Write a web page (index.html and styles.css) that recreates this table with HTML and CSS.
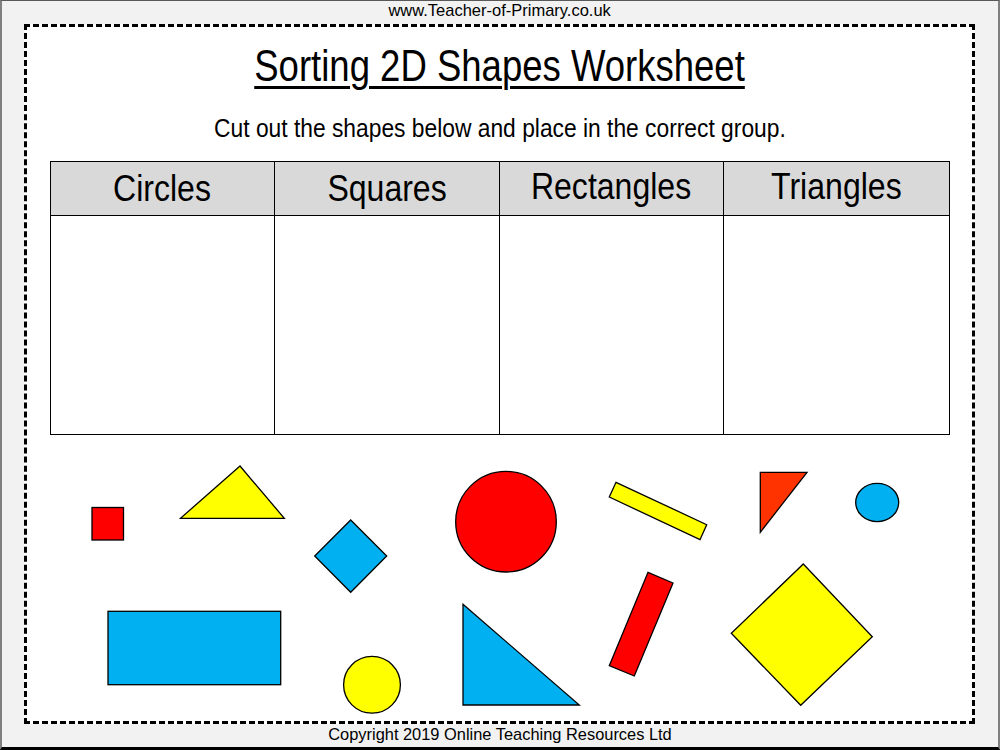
FILE: index.html
```html
<!DOCTYPE html>
<html lang="en">
<head>
<meta charset="utf-8">
<title>Sorting 2D Shapes Worksheet</title>
<link rel="stylesheet" href="styles.css">
</head>
<body>
<div class="frame">
  <div class="site"><span class="narrow n-small">www.Teacher-of-Primary.co.uk</span></div>
  <div class="sheet">
    <h1 class="title"><span class="narrow n-title">Sorting 2D Shapes Worksheet</span></h1>
    <p class="instr"><span class="narrow n-instr">Cut out the shapes below and place in the correct group.</span></p>
    <div class="table">
      <div class="th"><span class="narrow n-head">Circles</span></div>
      <div class="th"><span class="narrow n-head">Squares</span></div>
      <div class="th th-up"><span class="narrow n-head">Rectangles</span></div>
      <div class="th th-up"><span class="narrow n-head">Triangles</span></div>
      <div class="td"></div>
      <div class="td"></div>
      <div class="td"></div>
      <div class="td"></div>
    </div>
    <svg class="shapes" viewBox="27 436 945 285" width="945" height="285" xmlns="http://www.w3.org/2000/svg">
      <g stroke="#000" stroke-width="1.3" stroke-linejoin="miter">
        <rect x="92" y="507.5" width="31.5" height="32.5" fill="#ff0000"/>
        <polygon points="240,466 180.5,518.3 284.3,518.3" fill="#ffff00"/>
        <polygon points="350.7,520 386.7,556 350.7,592.3 314.7,556" fill="#00b0f0"/>
        <circle cx="506" cy="521.7" r="50.3" fill="#ff0000"/>
        <polygon points="616,482.3 706.7,524.7 700,539.7 609.3,497" fill="#ffff00"/>
        <polygon points="760.3,472.3 807,472.3 760.3,532.3" fill="#ff3300"/>
        <ellipse cx="877.2" cy="502.5" rx="21.5" ry="19.2" fill="#00b0f0"/>
        <rect x="108" y="611.3" width="172.7" height="73.4" fill="#00b0f0"/>
        <circle cx="372" cy="684.8" r="28.4" fill="#ffff00"/>
        <polygon points="463,604.3 579.3,705 463,705" fill="#00b0f0"/>
        <polygon points="648,572.3 673,583 634.3,676 609.3,665.7" fill="#ff0000"/>
        <polygon points="803.3,564 872.3,636.7 800.7,705.3 731.3,633.3" fill="#ffff00"/>
      </g>
    </svg>
  </div>
  <div class="copy"><span class="narrow n-copy">Copyright 2019 Online Teaching Resources Ltd</span></div>
</div>
</body>
</html>
```

FILE: styles.css
```css
* { box-sizing: border-box; }
html, body { margin: 0; padding: 0; }
body {
  background: #f2f2f2;
  font-family: "Liberation Sans", Arial, sans-serif;
  color: #000;
}
.frame {
  width: 1000px;
  height: 750px;
  border-left: 2px solid #808080;
  border-top: 1px solid #595959;
  border-right: 2px solid #808080;
  border-bottom: 3px solid #000;
  display: flex;
  flex-direction: column;
  align-items: center;
}
.narrow {
  display: inline-block;
  white-space: nowrap;
  transform-origin: center;
}
.n-small { transform: scaleX(0.97); }
.n-copy { transform: scaleX(0.965); }
.n-title {
  transform: scaleX(0.83);
  text-decoration: underline;
  text-decoration-thickness: 3px;
  text-underline-offset: 5px;
}
.n-instr { transform: scaleX(0.877); }
.n-head { transform: scaleX(0.89); }
.site {
  height: 23px;
  font-size: 17px;
  line-height: 20px;
  text-align: center;
}
.sheet {
  align-self: flex-start;
  margin-left: 22px;
  width: 951px;
  height: 700px;
  background: #fff;
  border: 3px dashed #000;
  display: flex;
  flex-direction: column;
  align-items: center;
}
.title {
  margin: 14px 0 0;
  font-weight: normal;
  font-size: 44px;
  line-height: 50px;
}
.instr {
  margin: 23px 0 0;
  font-size: 26px;
  line-height: 28px;
}
.table {
  margin-top: 19px;
  width: 900px;
  display: grid;
  grid-template-columns: repeat(4, 1fr);
  grid-template-rows: 54px 218px;
  border: 1.5px solid #000;
}
.th {
  background: #d9d9d9;
  border-bottom: 1.5px solid #000;
  border-right: 1px solid #000;
  font-size: 36px;
  line-height: 50px;
  padding-top: 2px;
  text-align: center;
}
.th-up { padding-top: 0; }
.td { border-right: 1px solid #000; }
.th:nth-child(4), .td:nth-child(8) { border-right: none; }
.shapes {
  display: block;
  margin-top: 1px;
}
.copy {
  margin-top: 1px;
  font-size: 17px;
  line-height: 20px;
  text-align: center;
}
```
